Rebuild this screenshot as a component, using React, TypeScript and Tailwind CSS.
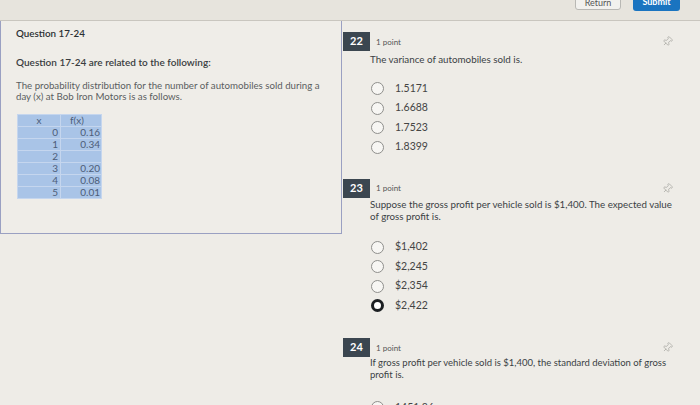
import { Pin } from 'lucide-react';

const rows = [
  { x: '0', f: '0.16' },
  { x: '1', f: '0.34' },
  { x: '2', f: '' },
  { x: '3', f: '0.20' },
  { x: '4', f: '0.08' },
  { x: '5', f: '0.01' },
];

function Radio({ checked }: { checked?: boolean }) {
  return (
    <span
      className={
        checked
          ? 'w-[13px] h-[13px] rounded-full border-[3px] border-[#1c1f22] bg-white shrink-0'
          : 'w-[13px] h-[13px] rounded-full border border-[#8f8f8c] bg-[#f7f6f3] shrink-0'
      }
    />
  );
}

function Question({
  num,
  text,
  options,
  selected,
  textClass,
  optionsGap,
}: {
  num: string;
  text: React.ReactNode;
  options: string[];
  selected?: number;
  textClass: string;
  optionsGap: string;
}) {
  return (
    <div>
      <div className="flex items-center">
        <div className="w-[27px] h-[19px] bg-[#3b4650] text-white text-[11px] font-bold flex items-center justify-center">
          {num}
        </div>
        <span className="ml-[6px] text-[8px] text-[#555]">1 point</span>
        <Pin size={11} strokeWidth={1.3} className="ml-auto mr-[27px] rotate-45 text-[#9a9a96]" />
      </div>
      <p className={`pl-[27px] leading-[12px] text-[#3a3f44] whitespace-nowrap ${textClass}`}>{text}</p>
      <div className={`pl-[28px] flex flex-col gap-[6.5px] ${optionsGap}`}>
        {options.map((o, i) => (
          <div key={o} className="flex items-center gap-[11px] h-[13px]">
            <Radio checked={selected === i} />
            <span className="text-[10.5px] text-[#444]">{o}</span>
          </div>
        ))}
      </div>
    </div>
  );
}

export default function App() {
  return (
    <div
      className="w-[700px] h-[405px] overflow-hidden bg-[#eeece7] text-[#333]"
      style={{ fontFamily: 'Lato, "Open Sans", sans-serif' }}
    >
      <div className="h-[21px] bg-[#e7e4dd] border-b border-[#c9c6bf] flex items-start justify-end pr-[20px] gap-[12px]">
        <div className="w-[46px] h-[11px] -mt-[1px] bg-[#f2f1ee] border border-[#b9b8b4] rounded-b-[3px] text-[9px] leading-[6px] text-center text-[#555]">
          Return
        </div>
        <div className="w-[47px] h-[12px] -mt-[1px] bg-[#1a74c0] rounded-b-[3px] text-[9px] leading-[6px] text-center text-white font-bold">
          Submit
        </div>
      </div>
      <div className="flex">
        <div className="w-[342px] h-[213px] border-l border-r border-b border-[#9aa0c2] bg-[#efede8] pl-[15px] pt-[6px] shrink-0">
          <h1 className="text-[9.8px] font-semibold text-[#2b2f33] leading-[12px]">Question 17-24</h1>
          <h2 className="mt-[17px] text-[10px] font-semibold text-[#3a3d40] leading-[12px]">
            Question 17-24 are related to the following:
          </h2>
          <p className="mt-[12px] text-[9.7px] leading-[11px] text-[#5a5d60] whitespace-nowrap">
            The probability distribution for the number of automobiles sold during a
            <br />
            day (x) at Bob Iron Motors is as follows.
          </p>
          <table className="mt-[12px] ml-[1px] bg-[#a9c4e7] text-[10px] text-[#4d5d78] border-collapse">
            <thead>
              <tr>
                <th className="w-[43px] h-[12px] leading-[11px] font-normal text-center border border-[#c5d6ee] p-0">x</th>
                <th className="w-[41px] h-[12px] leading-[11px] font-normal text-center border border-[#c5d6ee] p-0 pr-[8px]">f(x)</th>
              </tr>
            </thead>
            <tbody>
              {rows.map((r) => (
                <tr key={r.x}>
                  <td className="h-[12px] leading-[11px] text-right pr-[2px] border border-[#c5d6ee] p-0">{r.x}</td>
                  <td className="h-[12px] leading-[11px] text-right pr-[1px] border border-[#c5d6ee] p-0">{r.f}</td>
                </tr>
              ))}
            </tbody>
          </table>
        </div>
        <div className="flex-1 pt-[11px] pl-[1px]">
          <Question
            num="22"
            text="The variance of automobiles sold is."
            options={['1.5171', '1.6688', '1.7523', '1.8399']}
            textClass="mt-[2px] text-[9.8px]"
            optionsGap="mt-[17px]"
          />
          <div className="mt-[25px]">
            <Question
              num="23"
              text={
                <>
                  Suppose the gross profit per vehicle sold is $1,400. The expected value
                  <br />
                  of gross profit is.
                </>
              }
              options={['$1,402', '$2,245', '$2,354', '$2,422']}
              selected={3}
              textClass="text-[9.75px]"
              optionsGap="mt-[19px]"
            />
          </div>
          <div className="mt-[26px]">
            <Question
              num="24"
              text={
                <>
                  If gross profit per vehicle sold is $1,400, the standard deviation of gross
                  <br />
                  profit is.
                </>
              }
              options={['1451.86']}
              textClass="text-[9.5px]"
              optionsGap="mt-[20px]"
            />
          </div>
        </div>
      </div>
    </div>
  );
}
